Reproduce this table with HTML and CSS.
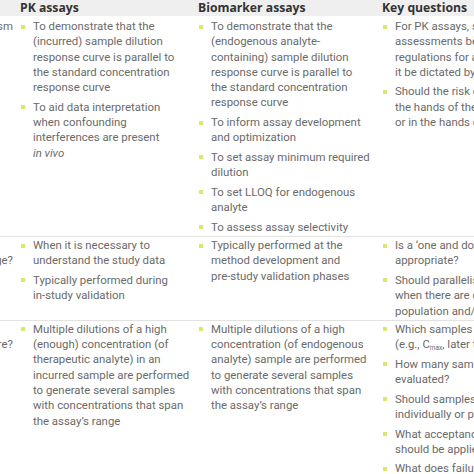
FILE: index.html
```html
<!DOCTYPE html>
<html>
<head>
<meta charset="utf-8">
<link rel="stylesheet" href="styles.css">
</head>
<body>
<div class="table">
  <div class="row head">
    <div class="cell"></div>
    <div class="cell">PK assays</div>
    <div class="cell">Biomarker assays</div>
    <div class="cell">Key questions</div>
  </div>
  <div class="row r1">
    <div class="cell label">Purpose/mechanism</div>
    <ul class="cell">
      <li><span>To demonstrate that the<br>(incurred) sample dilution<br>response curve is parallel to<br>the standard concentration<br>response curve</span></li>
      <li><span>To aid data interpretation<br>when confounding<br>interferences are present<br><i>in vivo</i></span></li>
    </ul>
    <ul class="cell">
      <li><span>To demonstrate that the<br>(endogenous analyte-<br>containing) sample dilution<br>response curve is parallel to<br>the standard concentration<br>response curve</span></li>
      <li><span>To inform assay development<br>and optimization</span></li>
      <li><span>To set assay minimum required<br>dilution</span></li>
      <li><span>To set LLOQ for endogenous<br>analyte</span></li>
      <li><span>To assess assay selectivity</span></li>
    </ul>
    <ul class="cell">
      <li><span>For PK assays, should parallelism<br>assessments be mandated by<br>regulations for all studies, or should<br>it be dictated by the data?</span></li>
      <li><span>Should the risk of parallelism failure be in<br>the hands of the bioanalytical laboratory<br>or in the hands of the sponsor?</span></li>
    </ul>
  </div>
  <div class="row r2">
    <div class="cell label">When?<br>At which stage?</div>
    <ul class="cell">
      <li><span>When it is necessary to<br>understand the study data</span></li>
      <li><span>Typically performed during<br>in-study validation</span></li>
    </ul>
    <ul class="cell">
      <li><span>Typically performed at the<br>method development and<br>pre-study validation phases</span></li>
    </ul>
    <ul class="cell">
      <li><span>Is a ‘one and done’ approach<br>appropriate?</span></li>
      <li><span>Should parallelism be reassessed<br>when there are changes in the study<br>population and/or matrix?</span></li>
    </ul>
  </div>
  <div class="row r3">
    <div class="cell label">How?<br>What is the procedure?</div>
    <ul class="cell">
      <li><span>Multiple dilutions of a high<br>(enough) concentration (of<br>therapeutic analyte) in an<br>incurred sample are performed<br>to generate several samples<br>with concentrations that span<br>the assay’s range</span></li>
    </ul>
    <ul class="cell">
      <li><span>Multiple dilutions of a high<br>concentration (of endogenous<br>analyte) sample are performed<br>to generate several samples<br>with concentrations that span<br>the assay’s range</span></li>
    </ul>
    <ul class="cell">
      <li><span>Which samples should be chosen<br>(e.g., C<sub>max</sub>, later time points)?</span></li>
      <li><span>How many samples should be<br>evaluated?</span></li>
      <li><span>Should samples be assessed<br>individually or pooled?</span></li>
      <li><span>What acceptance criteria<br>should be applied?</span></li>
      <li><span>What does failure mean?</span></li>
    </ul>
  </div>
</div>
</body>
</html>
```
FILE: styles.css
```css
html, body {
  margin: 0;
  padding: 0;
  background: #ffffff;
  overflow: hidden;
}
body {
  width: 474px;
  height: 474px;
  font-family: "Roboto", "Open Sans", sans-serif;
  font-weight: 400;
  color: #6a6a6a;
}
.table {
  margin-left: -140px;
  width: 740px;
}
.row {
  display: grid;
  grid-template-columns: 154px 178px 184px 224px;
}
.cell {
  margin: 0;
  padding: 0;
  list-style: none;
  white-space: nowrap;
}
.head {
  background: #eeefee;
  height: 16px;
  align-items: center;
  font-family: "Open Sans", "Lato", sans-serif;
  font-weight: 700;
  font-size: 12.2px;
  color: #333333;
  line-height: 16px;
}
.head .cell {
  padding-left: 6px;
}
.row.r1 {
  padding: 3px 0 1px;
  border-bottom: 1px solid #e2e2e2;
}
.row.r2 {
  padding: 1px 0 1px;
  border-bottom: 1px solid #e2e2e2;
}
.row.r3 {
  padding: 1px 0 0;
}
.label {
  justify-self: end;
  align-self: start;
  text-align: left;
  margin-right: 1px;
  font-size: 11.4px;
  line-height: 15.3px;
}
ul.cell li {
  display: flex;
  align-items: flex-start;
  padding-left: 7px;
  font-size: 11.4px;
  line-height: 15.3px;
  margin-bottom: 4.3px;
}
ul.cell li:last-child {
  margin-bottom: 0;
}
ul.cell li::before {
  content: "";
  flex: none;
  width: 4px;
  height: 4px;
  margin-top: 5.5px;
  margin-right: 8px;
  background: #dbe66e;
}
sub {
  font-size: 6.5px;
  line-height: 0;
  vertical-align: -2px;
}
```
